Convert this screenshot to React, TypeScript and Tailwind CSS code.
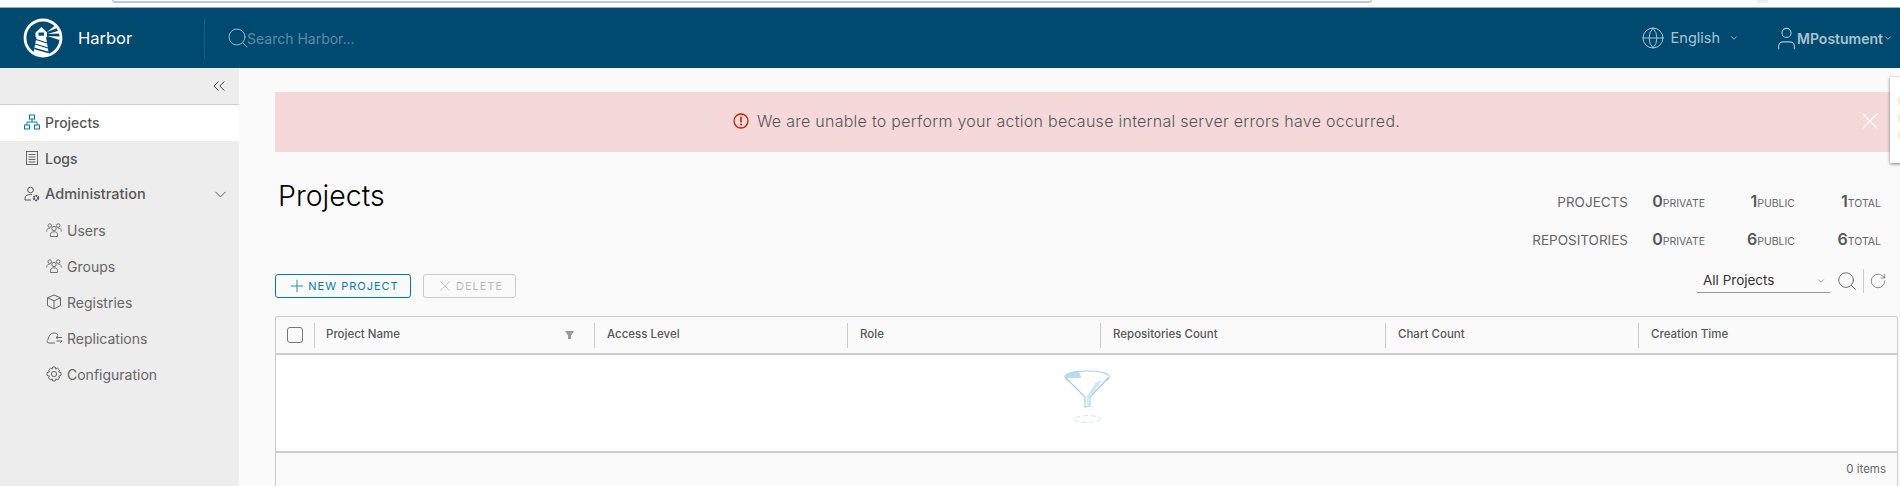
import { ChevronDown, ChevronsLeft, Globe, Plus, RotateCw, Search, User, X } from "lucide-react";

const font = { fontFamily: "Inter, 'Liberation Sans', sans-serif" };

function HarborLogo() {
  return (
    <svg width="42" height="42" viewBox="0 0 42 42" fill="none">
      <circle cx="21" cy="21" r="18" stroke="white" strokeWidth="2.8" />
      <path d="M11.5 36 L14.5 20 H24 L27 38 L19 39.5 Z" fill="white" />
      <path d="M13.5 15.5 L19.5 10 L25 15.5 V20 H13.5 Z" fill="white" />
      <path d="M16.5 15.5 h5.5 v3.2 h-5.5 Z" fill="#004a70" />
      <path d="M14 22.5 L25 26 M13.2 27 L26 31 M12.4 31.5 L26.8 35.5" stroke="#004a70" strokeWidth="1.3" />
      <path d="M25 15 L33 8.5 L35 11 Z M25.5 17 L37.5 13.5 L38 16.5 Z M25.5 19 L38 19.5 L37.5 23 Z" fill="white" />
    </svg>
  );
}

function OrgIcon({ className }: { className?: string }) {
  return (
    <svg width="16" height="16" viewBox="0 0 16 16" fill="none" stroke="currentColor" strokeWidth="1" className={className}>
      <rect x="5.5" y="1" width="5" height="4" />
      <rect x="0.5" y="11" width="5" height="4" />
      <rect x="10.5" y="11" width="5" height="4" />
      <path d="M8 5 V8 M3 11 V8 H13 V11" />
    </svg>
  );
}

function LogsIcon() {
  return (
    <svg width="16" height="16" viewBox="0 0 16 16" fill="#eeeeee" stroke="#666" strokeWidth="1">
      <rect x="2.5" y="1.5" width="11" height="13" />
      <path d="M4.5 4.5 H11.5 M4.5 7 H11.5 M4.5 9.5 H11.5 M4.5 12 H11.5" />
    </svg>
  );
}

function AdminIcon() {
  return (
    <svg width="16" height="16" viewBox="0 0 16 16" fill="none" stroke="#565656" strokeWidth="1">
      <circle cx="6.5" cy="4" r="2.8" />
      <path d="M1 14 V12 C1 9.5 4 8.5 6.5 8.5 C7 8.5 7.5 8.5 8 8.6 M1 14 H7" />
      <circle cx="12" cy="12" r="2.2" strokeWidth="2" strokeDasharray="1.6 0.6" />
    </svg>
  );
}

function UsersIcon() {
  return (
    <svg width="16" height="16" viewBox="0 0 16 16" fill="none" stroke="#666" strokeWidth="0.9">
      <circle cx="8" cy="6.5" r="2.2" />
      <path d="M4.5 14.5 V12.5 C4.5 10.5 6 9.8 8 9.8 C10 9.8 11.5 10.5 11.5 12.5 V14.5 Z" />
      <circle cx="3.8" cy="3.6" r="1.8" />
      <circle cx="12.2" cy="3.6" r="1.8" />
      <path d="M0.8 9.5 V8.4 C0.8 6.8 2.2 6.2 3.8 6.2 M15.2 9.5 V8.4 C15.2 6.8 13.8 6.2 12.2 6.2" />
    </svg>
  );
}

function BoxIcon() {
  return (
    <svg width="16" height="16" viewBox="0 0 16 16" fill="none" stroke="#666" strokeWidth="1">
      <path d="M8 1 L14.5 3.8 V11.5 L8 15 L1.5 11.5 V3.8 Z" />
      <path d="M1.5 3.8 L8 6.8 L14.5 3.8 M8 6.8 V15" />
    </svg>
  );
}

function CloudIcon() {
  return (
    <svg width="17" height="16" viewBox="0 0 17 16" fill="none" stroke="#666" strokeWidth="1">
      <path d="M9 13 H2.8 C1 13 0.5 10.5 2 9.5 C2.5 6.5 4.5 3 8 3 C10 3 11.5 4 12 5.5" />
      <path d="M16 7.5 H10 L12 5.8 M10 7.5 L12 9.2 M10.5 11 H16 M16 11 L14 12.8" />
    </svg>
  );
}

function GearIcon() {
  return (
    <svg width="16" height="16" viewBox="0 0 16 16" fill="none" stroke="#666" strokeWidth="1">
      <circle cx="8" cy="8" r="2.6" />
      <path d="M6.8 1 H9.2 L9.7 3 L11.5 2.2 L13.4 4 L12.6 5.9 L15 6.6 V9.4 L12.7 10.1 L13.5 12 L11.7 13.8 L9.8 13 L9.2 15 H6.8 L6.2 13 L4.3 13.8 L2.5 12 L3.3 10.1 L1 9.4 V6.6 L3.4 5.9 L2.6 4 L4.5 2.2 L6.3 3 Z" strokeLinejoin="round" />
    </svg>
  );
}

function AlertIcon() {
  return (
    <svg width="16" height="16" viewBox="0 0 16 16" fill="none">
      <circle cx="8" cy="8" r="7" stroke="#c92100" strokeWidth="1.3" />
      <path d="M8 3.8 V9.4" stroke="#c92100" strokeWidth="1.6" />
      <circle cx="8" cy="11.6" r="1" fill="#c92100" />
    </svg>
  );
}

function FunnelEmpty() {
  return (
    <svg width="46" height="54" viewBox="0 0 46 54" fill="none">
      <path d="M1 8 C1 4 11 2 23 2 C35 2 45 4 45 8 C45 12 35 14 23 14 C11 14 1 12 1 8 Z" fill="white" stroke="#9fd0e6" strokeWidth="1.2" />
      <path d="M2 6 C6 3 10 2.5 15 2.4 L19 13.5 C12 13.5 5 12 2 9 Z" fill="#b7dcee" />
      <path d="M2 9 L21 28 V38 L26 37 V28 L44 9" fill="white" stroke="#9fd0e6" strokeWidth="1.2" />
      <path d="M26 28 V37 L23 37.6 V27 L32 13 L38 11.5 Z" fill="#cfe8f4" />
      <ellipse cx="23.5" cy="50" rx="13" ry="3.4" stroke="#cfe6f2" strokeWidth="1" strokeDasharray="5 2.5" />
    </svg>
  );
}

function SubItem({ icon, label }: { icon: React.ReactNode; label: string }) {
  return (
    <div className="flex h-[36px] items-center pb-[2px] pl-[46px] text-[14px] text-[#666]">
      <span className="flex w-[21px] shrink-0">{icon}</span>
      {label}
    </div>
  );
}

function Stat({ n, label, w }: { n: number; label: string; w: string }) {
  return (
    <div className={`flex items-baseline justify-end ${w}`}>
      <span className="text-[16px] font-semibold text-[#565656]">{n}</span>
      <span className="text-[10.5px] text-[#666]">{label}</span>
    </div>
  );
}

const columns = [
  { label: "Access Level", w: "w-[253px]" },
  { label: "Role", w: "w-[253px]" },
  { label: "Repositories Count", w: "w-[285px]" },
  { label: "Chart Count", w: "w-[253px]" },
  { label: "Creation Time", w: "flex-1" },
];

export default function App() {
  return (
    <div className="flex h-[486px] w-[1900px] flex-col overflow-hidden bg-[#fafafa]" style={font}>
      <div className="flex h-[8px] shrink-0 items-start border-b border-[#a8a8a8] bg-white">
        <div className="ml-[112px] h-[3px] w-[1260px] rounded-b-[6px] border-x border-b-2 border-[#b4c7ee]" />
        <div className="ml-[385px] h-[3px] w-[11px] rounded-b-[2px] bg-[#eeeeee]" />
      </div>

      {/* header */}
      <header className="flex h-[60px] shrink-0 items-center bg-[#004a70] text-white">
        <div className="flex w-[204px] shrink-0 items-center pl-[22px]">
          <HarborLogo />
          <span className="ml-[14px] text-[16.5px]">Harbor</span>
        </div>
        <div className="h-[40px] w-px bg-[#1d5f82]" />
        <div className="ml-[21px] flex flex-1 items-center text-[14px] text-[#5f8ba3]">
          <Search size={24} strokeWidth={1} className="-mr-[3px] text-[#9cb8c7]" />
          Search Harbor...
        </div>
        <div className="flex items-center text-[14px] text-[#a9c3d1]">
          <Globe size={24} strokeWidth={1} />
          <span className="ml-[6px] text-[14.5px]">English</span>
          <ChevronDown size={10} className="ml-[9px]" />
          <User size={27} strokeWidth={1} className="-mr-[3px] ml-[34px]" />
          <span className="text-[14px] font-semibold">MPostument</span>
          <ChevronDown size={10} className="mr-[7px]" />
        </div>
      </header>

      <div className="flex min-h-0 flex-1">
        {/* sidebar */}
        <aside className="w-[239px] shrink-0 bg-[#ededed]">
          <div className="flex h-[37px] items-center justify-end border-b border-[#cfcfcf] pr-[10px]">
            <ChevronsLeft size={20} strokeWidth={1.1} className="text-[#333]" />
          </div>
          <div className="flex h-[36px] items-center bg-white pb-[2px] pl-[24px] text-[14px] font-medium text-[#565656]">
            <OrgIcon className="mr-[5px] text-[#0079b8]" />
            Projects
          </div>
          <div className="flex h-[36px] items-center pb-[2px] pl-[24px] text-[14px] font-medium text-[#565656]">
            <span className="mr-[5px] flex"><LogsIcon /></span>
            Logs
          </div>
          <div className="flex h-[36px] items-center justify-between pb-[2px] pl-[24px] pr-[9px] text-[14.5px] font-medium text-[#565656]">
            <span className="flex items-center">
              <span className="mr-[5px] flex"><AdminIcon /></span>
              Administration
            </span>
            <ChevronDown size={19} strokeWidth={1.2} />
          </div>
          <SubItem icon={<UsersIcon />} label="Users" />
          <SubItem icon={<UsersIcon />} label="Groups" />
          <SubItem icon={<BoxIcon />} label="Registries" />
          <SubItem icon={<CloudIcon />} label="Replications" />
          <SubItem icon={<GearIcon />} label="Configuration" />
        </aside>

        {/* main */}
        <main className="relative min-w-0 flex-1 pl-[36px] pt-[24px]">
          <div className="relative flex h-[60px] w-[1615px] items-center justify-center bg-[#f5d9da] pb-[2px] pr-[32px] text-[16px] font-light tracking-[0.27px] text-[#565656]">
            <span className="mr-[8px] flex"><AlertIcon /></span>
            We are unable to perform your action because internal server errors have occurred.
            <X size={28} strokeWidth={1} className="absolute right-[6px] top-[15px] text-white" />
          </div>
          <div className="absolute left-[1651px] top-[9px] flex h-[86px] w-[20px] flex-col gap-[9px] bg-white pl-[8px] pt-[20px] shadow-[0_1px_3px_rgba(0,0,0,0.5)]">
            <span className="h-[8px] w-[2px] bg-[#f4f1c0]" />
            <span className="h-[8px] w-[2px] bg-[#f4f1c0]" />
            <span className="h-[8px] w-[2px] bg-[#f4f1c0]" />
          </div>

          <div className="mt-[26px] flex items-start justify-between pr-[19px]">
            <h1 className="pl-[3px] text-[28.5px] font-light leading-[36px] text-black">Projects</h1>
            <div className="flex flex-col items-end gap-[18px] pt-[11px]">
              <div className="flex h-[20px] items-baseline">
                <span className="text-[13.5px] text-[#666]">PROJECTS</span>
                <Stat n={0} label="PRIVATE" w="w-[77px]" />
                <Stat n={1} label="PUBLIC" w="w-[90px]" />
                <Stat n={1} label="TOTAL" w="w-[86px]" />
              </div>
              <div className="flex h-[20px] items-baseline">
                <span className="text-[13.5px] text-[#666]">REPOSITORIES</span>
                <Stat n={0} label="PRIVATE" w="w-[77px]" />
                <Stat n={6} label="PUBLIC" w="w-[90px]" />
                <Stat n={6} label="TOTAL" w="w-[86px]" />
              </div>
            </div>
          </div>

          <div className="mt-[27px] flex h-[24px] items-center pr-[13px]">
            <button className="flex h-[24px] w-[136px] items-center justify-center rounded-[3px] border border-[#0079b8] text-[11px] tracking-[1px] text-[#0079b8]">
              <Plus size={20} strokeWidth={1} className="mr-[1px]" />
              NEW PROJECT
            </button>
            <button className="ml-[12px] flex h-[24px] w-[93px] items-center justify-center rounded-[3px] border border-[#ccc] text-[11px] tracking-[1px] text-[#bbb]">
              <X size={18} strokeWidth={1} className="mr-[2px]" />
              DELETE
            </button>
            <div className="mb-[10px] ml-auto flex items-center">
              <div className="flex h-[24px] w-[133px] items-center justify-between border-b border-[#9a9a9a] pl-[6px] pr-[4px] text-[13.5px] text-[#333]">
                All Projects
                <ChevronDown size={10} className="text-[#999]" />
              </div>
              <Search size={22} strokeWidth={1} className="ml-[6px] text-[#666]" />
              <div className="mx-[5px] h-[24px] w-px bg-[#ccc]" />
              <RotateCw size={18} strokeWidth={1} className="text-[#666]" />
            </div>
          </div>

          {/* datagrid */}
          <div className="mr-[2px] mt-[18px] flex h-[170px] flex-col rounded-t-[3px] border-x border-t border-[#ccc]">
            <div className="flex h-[38px] shrink-0 items-center border-b-2 border-[#ccc] text-[11.5px] font-medium text-[#565656]">
              <div className="flex h-[25px] w-[39px] shrink-0 items-center justify-center border-r border-[#ccc]">
                <span className="h-[16px] w-[16px] rounded-[3px] border border-[#777]" />
              </div>
              <div className="flex h-[25px] w-[280px] shrink-0 items-center justify-between border-r border-[#ccc] pl-[11px] pr-[20px]">
                Project Name
                <svg width="9" height="8" viewBox="0 0 9 8"><path d="M0 0 H9 L6 4.5 V8 H3 V4.5 Z" fill="#9a9a9a" /></svg>
              </div>
              {columns.map((c) => (
                <div key={c.label} className={`flex h-[25px] items-center pl-[12px] ${c.w} ${c.w === "flex-1" ? "" : "shrink-0 border-r border-[#ccc]"}`}>
                  {c.label}
                </div>
              ))}
            </div>
            <div className="flex h-[96px] shrink-0 justify-center bg-white pt-[14px]">
              <FunnelEmpty />
            </div>
            <div className="flex flex-1 items-center justify-end border-t-2 border-[#ccc] pr-[11px] text-[11.5px] text-[#666]">
              0 items
            </div>
          </div>
        </main>
      </div>
    </div>
  );
}
